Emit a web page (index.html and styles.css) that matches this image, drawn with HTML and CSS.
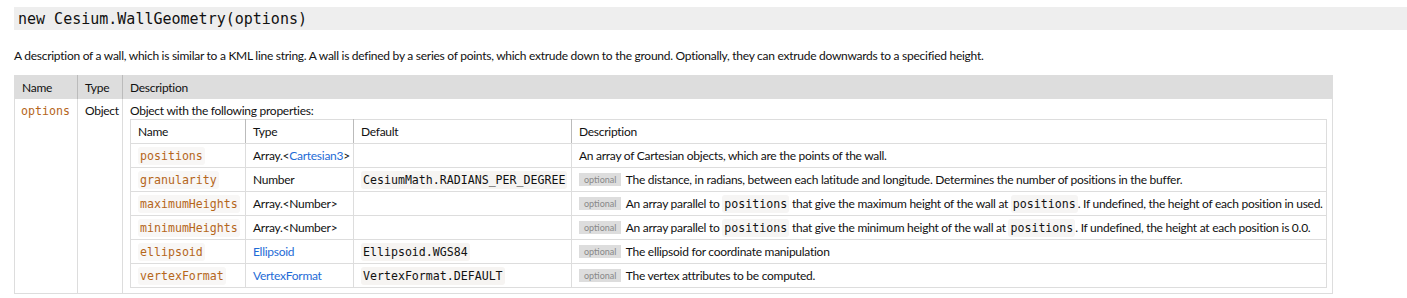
FILE: index.html
```html
<!DOCTYPE html>
<html>
<head>
<meta charset="utf-8">
<link rel="stylesheet" href="styles.css">
</head>
<body>
<h4 class="sig"><span class="sig-text">new Cesium.WallGeometry(options)</span></h4>
<p class="summary">A description of a wall, which is similar to a KML line string. A wall is defined by a series of points, which extrude down to the ground. Optionally, they can extrude downwards to a specified height.</p>
<table class="params">
  <thead>
    <tr><th class="c-name">Name</th><th class="c-type">Type</th><th class="c-desc">Description</th></tr>
  </thead>
  <tbody>
    <tr>
      <td class="pname"><code class="param">options</code></td>
      <td class="ptype">Object</td>
      <td class="pdesc">
        <div class="intro">Object with the following properties:</div>
        <table class="sub">
          <thead>
            <tr><th class="s-name">Name</th><th class="s-type">Type</th><th class="s-def">Default</th><th class="s-desc">Description</th></tr>
          </thead>
          <tbody>
            <tr>
              <td><code class="param">positions</code></td>
              <td>Array.&lt;<a class="link">Cartesian3</a>&gt;</td>
              <td></td>
              <td>An array of Cartesian objects, which are the points of the wall.</td>
            </tr>
            <tr>
              <td><code class="param">granularity</code></td>
              <td>Number</td>
              <td><code class="def">CesiumMath.RADIANS_PER_DEGREE</code></td>
              <td><span class="opt">optional</span> The distance, in radians, between each latitude and longitude. Determines the number of positions in the buffer.</td>
            </tr>
            <tr>
              <td><code class="param">maximumHeights</code></td>
              <td>Array.&lt;Number&gt;</td>
              <td></td>
              <td><span class="opt">optional</span> An array parallel to <code class="inl">positions</code> that give the maximum height of the wall at <code class="inl">positions</code>. If undefined, the height of each position in used.</td>
            </tr>
            <tr>
              <td><code class="param">minimumHeights</code></td>
              <td>Array.&lt;Number&gt;</td>
              <td></td>
              <td><span class="opt">optional</span> An array parallel to <code class="inl">positions</code> that give the minimum height of the wall at <code class="inl">positions</code>. If undefined, the height at each position is 0.0.</td>
            </tr>
            <tr>
              <td><code class="param">ellipsoid</code></td>
              <td><a class="link">Ellipsoid</a></td>
              <td><code class="def">Ellipsoid.WGS84</code></td>
              <td><span class="opt">optional</span> The ellipsoid for coordinate manipulation</td>
            </tr>
            <tr>
              <td><code class="param">vertexFormat</code></td>
              <td><a class="link">VertexFormat</a></td>
              <td><code class="def">VertexFormat.DEFAULT</code></td>
              <td><span class="opt">optional</span> The vertex attributes to be computed.</td>
            </tr>
          </tbody>
        </table>
      </td>
    </tr>
  </tbody>
</table>
</body>
</html>
```
FILE: styles.css
```css
html, body {
  margin: 0;
  padding: 0;
  background: #fff;
}
body {
  padding: 7px 0 0 14px;
  font-family: "Lato", "Open Sans", sans-serif;
  font-size: 12px;
  letter-spacing: -0.27px;
  color: #111;
}
.sig {
  margin: 0;
  background: #eee;
  height: 23px;
  display: flex;
  align-items: center;
  padding-left: 4px;
  font-weight: normal;
}
.sig-text {
  font-family: "DejaVu Sans Mono", monospace;
  font-size: 15px;
  letter-spacing: 0;
  color: #111;
}
.summary {
  margin: 18px 0 0 0;
  line-height: 16px;
}
.params {
  margin-top: 11px;
  border-collapse: collapse;
  table-layout: fixed;
  width: 1319px;
  border: 1px solid #ddd;
}
.params th {
  box-sizing: border-box;
  background: #ddd;
  text-align: left;
  font-weight: normal;
  height: 23px;
  padding: 0 7px;
  border-left: 1px solid #bbb;
}
.params th:first-child { border-left: none; }
.params > tbody > tr > td {
  vertical-align: top;
  padding: 3px 7px 5px 7px;
  border-left: 1px solid #ddd;
}
.params .c-name { width: 63px; }
.params .c-type { width: 45px; }
.pname { line-height: 17px; }
.ptype { line-height: 17px; }
.intro { line-height: 17px; height: 17px; }
.params > tbody > tr > td.pname { padding-left: 6px; padding-right: 6px; }
code { font-family: "DejaVu Sans Mono", monospace; font-size: 11.6px; letter-spacing: 0; }
.param {
  color: #b5661a;
  background: #f8f7f6;
  padding: 2px 2px;
  border-radius: 3px;
}
.pname .param { background: transparent; padding: 0; }
.def {
  color: #111;
  background: #f6f4f2;
  padding: 2px 2px;
  border-radius: 3px;
}
.inl {
  color: #111;
  background: #f6f5f4;
  padding: 2px 2px;
  border-radius: 3px;
}
.link { color: #1e6bd6; text-decoration: none; }
.sub {
  border-collapse: collapse;
  table-layout: fixed;
  width: 1197px;
  border: 1px solid #ddd;
  margin-top: 0;
}
.sub th {
  box-sizing: border-box;
  background: #fff;
  border-left: 1px solid #bbb;
  border-bottom: 1px solid #ddd;
  height: 24px;
}
.sub th:first-child { border-left: none; }
.sub td {
  box-sizing: border-box;
  height: 24px;
  padding: 1px 7px 0 7px;
  border-top: 1px solid #ddd;
  border-left: 1px solid #ddd;
  white-space: nowrap;
}
.sub .s-name { width: 115px; }
.sub .s-type { width: 108px; }
.sub .s-def { width: 218px; }
.opt {
  display: inline-block;
  background: #ddd;
  color: #888;
  font-size: 9px;
  letter-spacing: 0;
  line-height: 13px;
  padding: 0 5px;
  margin-right: 2px;
  vertical-align: 1px;
}
```
